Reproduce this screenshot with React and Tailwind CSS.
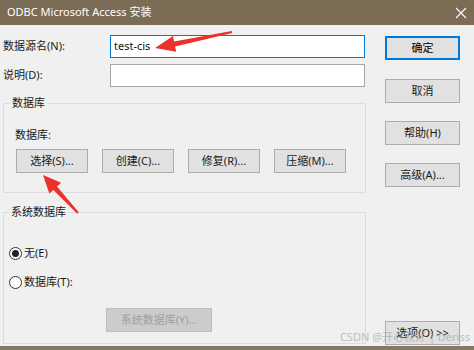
import React from 'react';

const font = { fontFamily: '"Noto Sans", "Noto Sans CJK SC", sans-serif' };

const Btn = ({ children, className = '', primary, disabled }) => (
  <div
    className={`flex items-center justify-center h-[24px] text-[11px] border ${
      primary
        ? 'border-[#0078d7] bg-[#e1e1e1] shadow-[inset_0_0_0_1px_#0078d7]'
        : disabled
        ? 'border-[#bfbfbf] bg-[#cccccc] text-[#a0a0a0]'
        : 'border-[#adadad] bg-[#e1e1e1] text-[#1a1a1a]'
    } ${className}`}
  >
    {children}
  </div>
);

const Radio = ({ checked, label, className = '' }) => (
  <div className={`flex items-center h-[16px] ${className}`}>
    <div className="w-[13px] h-[13px] rounded-full border border-[#333] bg-white flex items-center justify-center ml-[5px]">
      {checked && <div className="w-[7px] h-[7px] rounded-full bg-[#222]" />}
    </div>
    <span className="ml-[2px] text-[11px] text-[#1a1a1a]">{label}</span>
  </div>
);

export default function App() {
  return (
    <div className="relative w-[474px] h-[350px] overflow-hidden bg-[#f0f0f0]" style={font}>
      {/* Title bar */}
      <div className="h-[25px] bg-[#7b6c56] flex items-center justify-between pl-[7px] pr-[6px]">
        <span className="text-[11px] text-white">ODBC Microsoft Access 安装</span>
        <svg width="12" height="12" viewBox="0 0 12 12" className="mr-[1px]">
          <path d="M1 1L11 11M11 1L1 11" stroke="#fff" strokeWidth="1.1" />
        </svg>
      </div>

      <div className="flex h-[321px]">
        {/* Left column */}
        <div className="w-[366px] pl-[3px] flex flex-col">
          <div className="flex items-center mt-[10px]">
            <span className="w-[107px] text-[11px] text-[#1a1a1a]">数据源名(N):</span>
            <div className="w-[255px] h-[23px] border border-[#0078d7] bg-white flex items-center pl-[3px] text-[11px] text-[#111]">
              test-cis
            </div>
          </div>
          <div className="flex items-center mt-[6px]">
            <span className="w-[107px] text-[11px] text-[#1a1a1a]">说明(D):</span>
            <div className="w-[255px] h-[23px] border border-[#a6a6a6] bg-white" />
          </div>

          <fieldset className="mt-[8px] w-[363px] h-[98px] border border-[#dcdcdc] pl-[11px]">
            <legend className="ml-[-5px] px-[2px] text-[11px] leading-[16px] text-[#1a1a1a]">数据库</legend>
            <div className="mt-[16px] text-[11px] leading-[16px] text-[#1a1a1a]">数据库:</div>
            <div className="flex gap-[14px] mt-[6px] ml-[1px]">
              <Btn className="w-[72px]">选择(S)...</Btn>
              <Btn className="w-[72px]">创建(C)...</Btn>
              <Btn className="w-[72px]">修复(R)...</Btn>
              <Btn className="w-[72px]">压缩(M)...</Btn>
            </div>
          </fieldset>

          <fieldset className="mt-[11px] w-[363px] h-[140px] border border-[#dcdcdc]">
            <legend className="ml-[5px] px-[2px] text-[11px] leading-[16px] text-[#1a1a1a]">系统数据库</legend>
            <Radio checked label="无(E)" className="mt-[25px]" />
            <Radio label="数据库(T):" className="mt-[13px]" />
            <Btn disabled className="w-[106px] ml-[102px] mt-[18px]">系统数据库(Y)...</Btn>
          </fieldset>
        </div>

        {/* Right column */}
        <div className="ml-[19px] w-[75px] flex flex-col">
          <Btn primary className="mt-[11px]">确定</Btn>
          <Btn className="mt-[19px]">取消</Btn>
          <Btn className="mt-[18px]">帮助(H)</Btn>
          <Btn className="mt-[18px]">高级(A)...</Btn>
          <Btn className="mt-[134px]">选项(O) &gt;&gt;</Btn>
        </div>
      </div>
      <div className="h-[4px] bg-[#857964]" />

      {/* Red annotation arrows */}
      <svg className="absolute left-0 top-0 pointer-events-none" width="474" height="350">
        <polygon
          points="155,48 176.2,51.7 175.1,46.4 232.2,33 231.8,31 174.1,41.5 173,36.1"
          fill="#e8322b"
        />
        <polygon
          points="43,175 61.1,182.8 57,186.5 78.7,212.3 77.3,213.7 53.4,189.9 49.3,193.6"
          fill="#e8322b"
        />
      </svg>

      {/* Watermark */}
      <div className="absolute right-[4px] bottom-[5px] text-[11px] text-[#a8a8a8] opacity-70">
        CSDN @开心就好 | Deriss
      </div>
    </div>
  );
}
